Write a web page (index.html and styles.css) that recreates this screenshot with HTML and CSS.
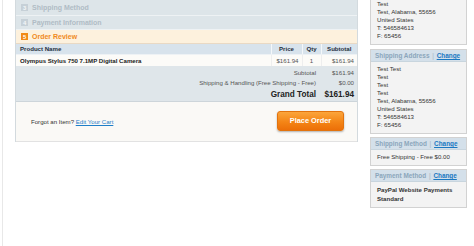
FILE: index.html
```html
<!DOCTYPE html>
<html>
<head>
<meta charset="utf-8">
<link rel="stylesheet" href="styles.css">
</head>
<body>
<div class="page">
  <div class="gutter"></div>
  <div class="main">
    <div class="step inactive first"><span class="num">3</span><span class="title">Shipping Method</span></div>
    <div class="step inactive"><span class="num">4</span><span class="title">Payment Information</span></div>
    <div class="step active"><span class="num">5</span><span class="title">Order Review</span></div>
    <table class="items">
      <colgroup><col class="w-name"><col class="w-price"><col class="w-qty"><col class="w-sub"></colgroup>
      <thead>
        <tr><th class="c-name">Product Name</th><th class="c-mid">Price</th><th class="c-mid">Qty</th><th class="c-mid">Subtotal</th></tr>
      </thead>
      <tbody>
        <tr class="item"><td class="c-name">Olympus Stylus 750 7.1MP Digital Camera</td><td class="c-num">$161.94</td><td class="c-qty">1</td><td class="c-num">$161.94</td></tr>
      </tbody>
      <tfoot>
        <tr class="tot first-tot"><td colspan="3" class="lbl">Subtotal</td><td class="val">$161.94</td></tr>
        <tr class="tot"><td colspan="3" class="lbl">Shipping &amp; Handling (Free Shipping - Free)</td><td class="val">$0.00</td></tr>
        <tr class="tot grand"><td colspan="3" class="lbl">Grand Total</td><td class="val">$161.94</td></tr>
      </tfoot>
    </table>
    <div class="footer">
      <p class="forgot">Forgot an Item? <a href="#" class="link">Edit Your Cart</a></p>
      <button class="place">Place Order</button>
    </div>
  </div>
  <aside class="sidebar">
    <div class="sbox top">
      <div class="sbox-body">Test<br>Test, Alabama, 55656<br>United States<br>T: 546584613<br>F: 65456</div>
    </div>
    <div class="sbox">
      <div class="sbox-head">Shipping Address <span class="sep">|</span> <a href="#" class="change">Change</a></div>
      <div class="sbox-body">Test Test<br>Test<br>Test<br>Test<br>Test, Alabama, 55656<br>United States<br>T: 546584613<br>F: 65456</div>
    </div>
    <div class="sbox">
      <div class="sbox-head">Shipping Method <span class="sep">|</span> <a href="#" class="change">Change</a></div>
      <div class="sbox-body">Free Shipping - Free $0.00</div>
    </div>
    <div class="sbox">
      <div class="sbox-head">Payment Method <span class="sep">|</span> <a href="#" class="change">Change</a></div>
      <div class="sbox-body strong">PayPal Website Payments<br>Standard</div>
    </div>
  </aside>
</div>
</body>
</html>
```

FILE: styles.css
```css
* { box-sizing: border-box; }
body {
  margin: 0;
  background: #fff;
  font-family: "Liberation Sans", Arial, sans-serif;
  font-size: 6.1px;
  color: #333;
}
.page {
  display: flex;
  height: 246px;
  overflow: hidden;
}
.gutter {
  width: 3px;
  border-right: 1px solid #e8e8e8;
  margin-right: 12px;
  flex-shrink: 0;
}
.main {
  width: 343px;
  flex-shrink: 0;
  align-self: flex-start;
  border-left: 1px solid #d3dade;
  border-right: 1px solid #d3dade;
}
.step {
  display: flex;
  align-items: center;
  height: 14px;
  padding-left: 5px;
  background: #dde5e9;
  border-bottom: 1px solid #eef2f4;
  font-weight: bold;
  font-size: 7px;
}
.step.first { height: 16px; }
.step .num {
  width: 7px;
  height: 7px;
  display: flex;
  align-items: center;
  justify-content: center;
  margin-right: 4px;
  font-size: 5.8px;
}
.inactive .num { background: #c6d0d7; color: #f4f7f9; }
.inactive .title { color: #b0bcc5; }
.active {
  background: #fdf1dd;
  border-bottom: 1px solid #e9d9c4;
}
.active .num { background: #f18a16; color: #fff; }
.active .title { color: #f08a1c; }

.items {
  width: 100%;
  border-collapse: collapse;
  table-layout: fixed;
}
.w-name { width: 255px; }
.w-price { width: 31px; }
.w-qty { width: 19px; }
.w-sub { width: 36px; }
.items th {
  height: 10px;
  padding: 0 3px;
  background: #d8e3ec;
  color: #1f2f3d;
  font-weight: bold;
  font-size: 6.1px;
  border-bottom: 1px solid #eef2f5;
}
.items th + th { border-left: 1px solid #f4f7f9; }
.items th.c-name { text-align: left; padding-left: 4px; }
.items th.c-mid { text-align: center; }
.item td {
  height: 12px;
  background: #fcfbf8;
  padding: 0 3px;
}
.item td + td { border-left: 1px solid #eeeeee; }
.item .c-name { font-weight: bold; color: #222; padding-left: 4px; }
.item .c-num { text-align: right; color: #555; }
.item .c-qty { text-align: center; color: #555; }
.tot td {
  background: #dfe6ea;
  height: 11px;
  color: #555;
  padding: 0 3px;
}
.tot .lbl { text-align: right; padding-right: 5px; }
.tot .val { text-align: right; }
.first-tot td { padding-top: 1px; }
.grand td {
  height: 13px;
  font-size: 8.2px;
  font-weight: bold;
  color: #222;
  border-bottom: 1px solid #cdd5da;
}
.footer {
  height: 40px;
  display: flex;
  align-items: center;
  justify-content: space-between;
  padding: 0 13px 0 15px;
  background: #faf9f6;
  border-bottom: 1px solid #e2e2e2;
}
.forgot { margin: 0; color: #333; }
.link { color: #1e7ec8; text-decoration: underline; }
.place {
  width: 67px;
  height: 20px;
  margin-top: -1px;
  border: 1px solid #e2730e;
  border-radius: 3px;
  background: linear-gradient(#fba53c, #f48516 55%, #ec6f08);
  color: #fff;
  font-family: "Liberation Sans", Arial, sans-serif;
  font-weight: bold;
  font-size: 7.4px;
  box-shadow: 0 1px 2px rgba(0,0,0,.3);
  padding: 0;
}

.sidebar {
  width: 97px;
  margin-left: 12px;
  flex-shrink: 0;
}
.sbox {
  border: 1px solid #d2d2d2;
  background: #f3f3f3;
  margin-bottom: 3px;
}
.sbox.top {
  border-top: none;
  margin-bottom: 4px;
}
.sbox.top .sbox-body { padding: 0 6px 4px; }
.sbox-head {
  height: 12px;
  line-height: 11px;
  padding-left: 4px;
  background: #d4e0ea;
  border-bottom: 1px solid #c8d5de;
  font-weight: bold;
  font-size: 6.4px;
  color: #8ba6bb;
  white-space: nowrap;
}
.sep { color: #9fb2c1; font-weight: normal; margin: 0 1px; }
.change { color: #1a78c2; text-decoration: underline; }
.sbox-body {
  padding: 3px 6px 4px;
  line-height: 8px;
  color: #333;
}
.sbox-body.strong { font-weight: bold; line-height: 9px; }
```
